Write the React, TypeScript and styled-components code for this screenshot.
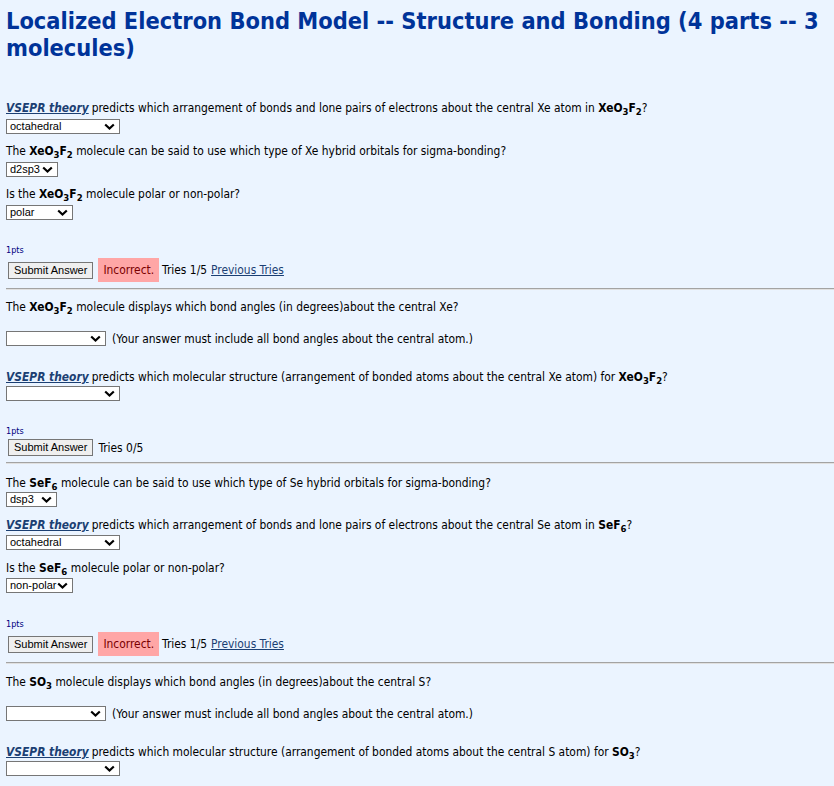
import React from 'react';
import styled, { createGlobalStyle } from 'styled-components';

const GlobalStyle = createGlobalStyle`
	html {
		overflow: hidden;
	}
	html, body {
		margin: 0;
		padding: 0;
		background: #ebf4ff;
	}
	body {
		font-family: Tahoma, "DejaVu Sans Condensed", "DejaVu Sans", sans-serif;
		color: #000;
	}
`;

const Page = styled.div`
	padding: 8px 0 8px 6px;
`;

const Title = styled.h1`
	margin: 0 0 39px 0;
	font-size: 23.4px;
	line-height: 27px;
	font-weight: bold;
	color: #003399;
`;

const Section = styled.div<{ $top?: number }>`
	padding-top: ${(p) => p.$top ?? 12}px;
`;

const Question = styled.div<{ $gap?: number }>`
	margin-bottom: ${(p) => p.$gap ?? 10}px;
`;

const Prompt = styled.div<{ $after?: number }>`
	font-size: 11.9px;
	line-height: 14px;
	height: 14px;
	white-space: nowrap;
	margin-bottom: ${(p) => p.$after ?? 4}px;
`;

const Theory = styled.a`
	color: #1b3f73;
	font-weight: bold;
	font-style: italic;
	text-decoration: underline;
	padding-right: 3px;
`;

const Formula = styled.b`
	font-weight: bold;
	sub {
		font-size: 9.5px;
		vertical-align: baseline;
		position: relative;
		top: 3px;
		line-height: 0;
	}
`;

const SelectRow = styled.div`
	display: flex;
	align-items: center;
	gap: 6px;
	font-size: 11.9px;
	height: 15px;
`;

const SelectWrap = styled.span<{ $w: number }>`
	position: relative;
	display: block;
	width: ${(p) => p.$w}px;
	height: 15px;
`;

const NativeSelect = styled.select`
	appearance: none;
	-webkit-appearance: none;
	display: block;
	box-sizing: border-box;
	width: 100%;
	height: 15px;
	margin: 0;
	padding: 0 12px 0 3px;
	border: 1px solid #767676;
	border-radius: 0;
	background: #fff;
	font-family: "Liberation Sans", Arial, sans-serif;
	font-size: 11px;
	line-height: 13px;
	color: #000;
`;

const Chevron = styled.svg`
	position: absolute;
	right: 5px;
	top: 4px;
	width: 11px;
	height: 7px;
	pointer-events: none;
`;

const Points = styled.div<{ $top?: number }>`
	font-size: 9px;
	line-height: 11px;
	color: #000080;
	margin: ${(p) => p.$top ?? 25}px 0 2px 0;
`;

const SubmitRow = styled.div<{ $tall?: boolean }>`
	display: flex;
	align-items: center;
	height: ${(p) => (p.$tall ? 24 : 17)}px;
	font-size: 11.9px;
	margin-left: 2px;
`;

const Button = styled.button`
	box-sizing: border-box;
	height: 17px;
	padding: 0 5px;
	margin: 0 5px 0 0;
	background: #efefef;
	border: 1px solid #767676;
	border-radius: 0;
	font-family: "Liberation Sans", Arial, sans-serif;
	font-size: 11px;
	line-height: 15px;
	color: #000;
`;

const Incorrect = styled.span`
	display: inline-flex;
	align-items: center;
	height: 24px;
	padding: 0 5px;
	margin-right: 3px;
	background: #ffa6a6;
	color: #7a0000;
`;

const Tries = styled.span`
	margin-right: 4px;
`;

const PrevLink = styled.a`
	color: #1b3f73;
	text-decoration: underline;
`;

const Rule = styled.hr`
	margin: 6px 0 0 0;
	border: none;
	border-top: 1px solid #a3a3a3;
	border-bottom: 1px solid #e0e0e0;
`;

const Note = styled.span``;

const F = ({ parts }: { parts: [string, string?][] }) => (
	<Formula>
		{parts.map(([el, n], i) => (
			<React.Fragment key={i}>
				{el}
				{n && <sub>{n}</sub>}
			</React.Fragment>
		))}
	</Formula>
);

const XeO3F2 = () => <F parts={[['XeO', '3'], ['F', '2']]} />;
const SeF6 = () => <F parts={[['SeF', '6']]} />;
const SO3 = () => <F parts={[['SO', '3']]} />;

const Select = ({ width, value }: { width: number; value: string }) => (
	<SelectWrap $w={width}>
		<NativeSelect defaultValue={value}>
			<option value={value}>{value}</option>
		</NativeSelect>
		<Chevron viewBox="0 0 11 7">
			<path d="M1.2 1.5 L5.5 5.5 L9.8 1.5" fill="none" stroke="#000" strokeWidth="2.2" />
		</Chevron>
	</SelectWrap>
);

const VSEPR = () => <Theory href="#">VSEPR theory</Theory>;

const Submit = ({ incorrect, tries }: { incorrect?: boolean; tries: string }) => (
	<SubmitRow $tall={incorrect}>
		<Button>Submit Answer</Button>
		{incorrect && <Incorrect>Incorrect.</Incorrect>}
		<Tries>Tries {tries}</Tries>
		{incorrect && <PrevLink href="#">Previous Tries</PrevLink>}
	</SubmitRow>
);

export default function App() {
	return (
		<Page>
			<GlobalStyle />
			<Title>Localized Electron Bond Model -- Structure and Bonding (4 parts -- 3 molecules)</Title>

			<Question>
				<Prompt>
					<VSEPR />predicts which arrangement of bonds and lone pairs of electrons about the central Xe atom in <XeO3F2 />?
				</Prompt>
				<Select width={114} value="octahedral" />
			</Question>
			<Question>
				<Prompt>
					The <XeO3F2 /> molecule can be said to use which type of Xe hybrid orbitals for sigma-bonding?
				</Prompt>
				<Select width={52} value="d2sp3" />
			</Question>
			<Question>
				<Prompt>
					Is the <XeO3F2 /> molecule polar or non-polar?
				</Prompt>
				<Select width={67} value="polar" />
			</Question>
			<Points>1pts</Points>
			<Submit incorrect tries="1/5" />
			<Rule />

			<Section $top={10}>
				<Question $gap={24}>
					<Prompt $after={17}>
						The <XeO3F2 /> molecule displays which bond angles (in degrees)about the central Xe?
					</Prompt>
					<SelectRow>
						<Select width={100} value="" />
						<Note>(Your answer must include all bond angles about the central atom.)</Note>
					</SelectRow>
				</Question>
				<Question>
					<Prompt $after={2}>
						<VSEPR />predicts which molecular structure (arrangement of bonded atoms about the central Xe atom) for <XeO3F2 />?
					</Prompt>
					<Select width={114} value="" />
				</Question>
				<Points>1pts</Points>
				<Submit tries="0/5" />
				<Rule />
			</Section>

			<Section>
				<Question $gap={11}>
					<Prompt $after={2}>
						The <SeF6 /> molecule can be said to use which type of Se hybrid orbitals for sigma-bonding?
					</Prompt>
					<Select width={51} value="dsp3" />
				</Question>
				<Question $gap={11}>
					<Prompt $after={3}>
						<VSEPR />predicts which arrangement of bonds and lone pairs of electrons about the central Se atom in <SeF6 />?
					</Prompt>
					<Select width={114} value="octahedral" />
				</Question>
				<Question>
					<Prompt $after={3}>
						Is the <SeF6 /> molecule polar or non-polar?
					</Prompt>
					<Select width={67} value="non-polar" />
				</Question>
				<Points $top={26}>1pts</Points>
				<Submit incorrect tries="1/5" />
				<Rule />
			</Section>

			<Section $top={11}>
				<Question $gap={24}>
					<Prompt $after={17}>
						The <SO3 /> molecule displays which bond angles (in degrees)about the central S?
					</Prompt>
					<SelectRow>
						<Select width={100} value="" />
						<Note>(Your answer must include all bond angles about the central atom.)</Note>
					</SelectRow>
				</Question>
				<Question>
					<Prompt $after={2}>
						<VSEPR />predicts which molecular structure (arrangement of bonded atoms about the central S atom) for <SO3 />?
					</Prompt>
					<Select width={114} value="" />
				</Question>
			</Section>
		</Page>
	);
}
